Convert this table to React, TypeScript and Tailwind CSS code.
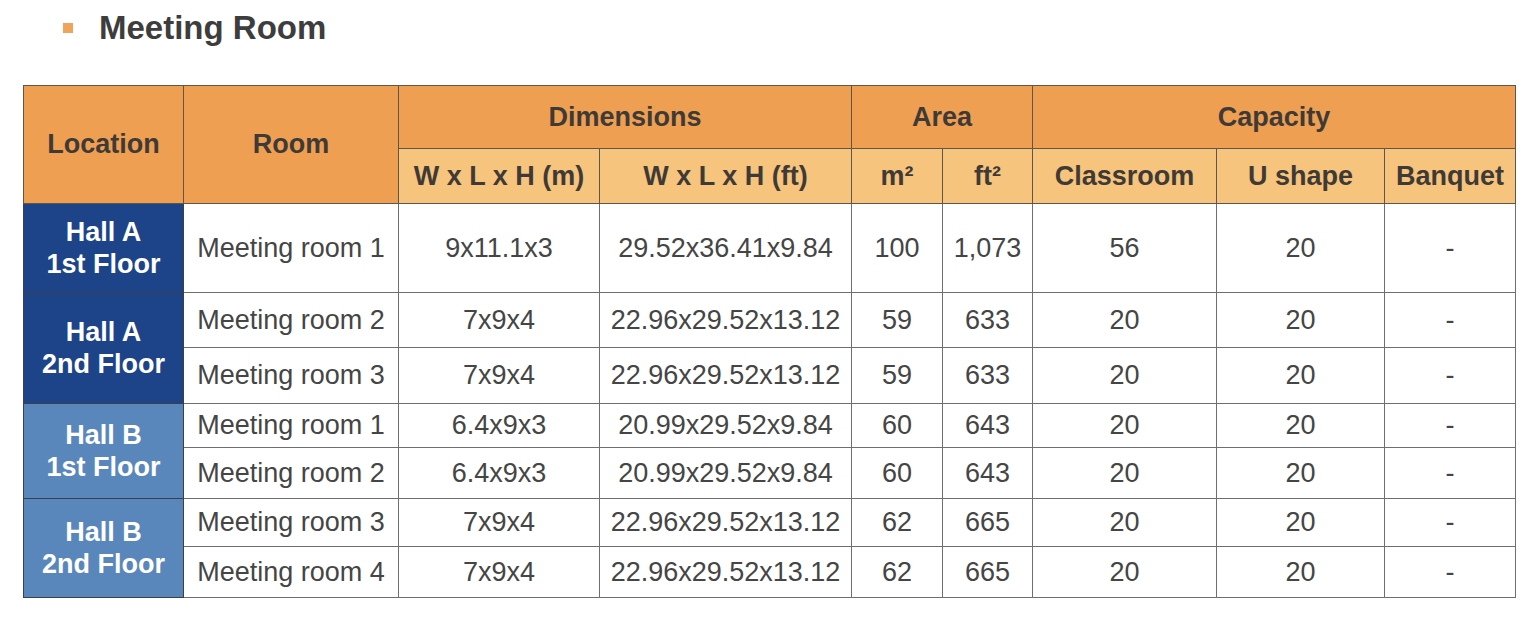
import React from "react";

type Row = {
  room: string;
  m: string;
  ft: string;
  m2: string;
  ft2: string;
  classroom: string;
  ushape: string;
  banquet: string;
  h: string;
};

type Group = {
  name: [string, string];
  tone: "dark" | "light";
  rows: Row[];
};

const groups: Group[] = [
  {
    name: ["Hall A", "1st Floor"],
    tone: "dark",
    rows: [
      { room: "Meeting room 1", m: "9x11.1x3", ft: "29.52x36.41x9.84", m2: "100", ft2: "1,073", classroom: "56", ushape: "20", banquet: "-", h: "h-[89px]" },
    ],
  },
  {
    name: ["Hall A", "2nd Floor"],
    tone: "dark",
    rows: [
      { room: "Meeting room 2", m: "7x9x4", ft: "22.96x29.52x13.12", m2: "59", ft2: "633", classroom: "20", ushape: "20", banquet: "-", h: "h-[55px]" },
      { room: "Meeting room 3", m: "7x9x4", ft: "22.96x29.52x13.12", m2: "59", ft2: "633", classroom: "20", ushape: "20", banquet: "-", h: "h-[56px]" },
    ],
  },
  {
    name: ["Hall B", "1st Floor"],
    tone: "light",
    rows: [
      { room: "Meeting room 1", m: "6.4x9x3", ft: "20.99x29.52x9.84", m2: "60", ft2: "643", classroom: "20", ushape: "20", banquet: "-", h: "h-[44px]" },
      { room: "Meeting room 2", m: "6.4x9x3", ft: "20.99x29.52x9.84", m2: "60", ft2: "643", classroom: "20", ushape: "20", banquet: "-", h: "h-[51px]" },
    ],
  },
  {
    name: ["Hall B", "2nd Floor"],
    tone: "light",
    rows: [
      { room: "Meeting room 3", m: "7x9x4", ft: "22.96x29.52x13.12", m2: "62", ft2: "665", classroom: "20", ushape: "20", banquet: "-", h: "h-[48px]" },
      { room: "Meeting room 4", m: "7x9x4", ft: "22.96x29.52x13.12", m2: "62", ft2: "665", classroom: "20", ushape: "20", banquet: "-", h: "h-[51px]" },
    ],
  },
];

const head = "border border-[#5e554c] bg-[#ee9f52] text-[#3f3a36] font-bold text-[27px] leading-none text-center align-middle p-0";
const sub = "border border-[#5e554c] bg-[#f6c47c] text-[#3f3a36] font-bold text-[27px] leading-none text-center align-middle p-0";
const cell = "border border-[#6f6f6f] text-[#454545] text-[27px] leading-none text-center align-middle p-0";

export default function App() {
  return (
    <div className="w-[1536px] h-[634px] bg-white font-['Liberation_Sans',Arial,sans-serif]">
      <div className="flex items-center h-[56px] pl-[63px]">
        <span className="w-[10px] h-[10px] bg-[#f0a35a] mr-[26px]" />
        <h1 className="text-[33px] font-bold text-[#3d3d3d]">Meeting Room</h1>
      </div>

      <table className="ml-[23px] mt-[29px] w-[1492px] border-collapse table-fixed">
        <colgroup>
          <col className="w-[160px]" />
          <col className="w-[215px]" />
          <col className="w-[201px]" />
          <col className="w-[252px]" />
          <col className="w-[91px]" />
          <col className="w-[90px]" />
          <col className="w-[184px]" />
          <col className="w-[168px]" />
          <col className="w-[131px]" />
        </colgroup>
        <thead>
          <tr className="h-[63px]">
            <th rowSpan={2} className={head}>Location</th>
            <th rowSpan={2} className={head}>Room</th>
            <th colSpan={2} className={head}>Dimensions</th>
            <th colSpan={2} className={head}>Area</th>
            <th colSpan={3} className={head}>Capacity</th>
          </tr>
          <tr className="h-[55px]">
            <th className={sub}>W x L x H (m)</th>
            <th className={sub}>W x L x H (ft)</th>
            <th className={sub}>m²</th>
            <th className={sub}>ft²</th>
            <th className={sub}>Classroom</th>
            <th className={sub}>U shape</th>
            <th className={sub}>Banquet</th>
          </tr>
        </thead>
        <tbody>
          {groups.map((g) =>
            g.rows.map((r, i) => (
              <tr key={g.name.join() + r.room} className={r.h}>
                {i === 0 && (
                  <td
                    rowSpan={g.rows.length}
                    className={
                      "border border-[#3a3f4a] text-white font-bold text-[27px] leading-[32px] text-center align-middle p-0 " +
                      (g.tone === "dark" ? "bg-[#1d4389]" : "bg-[#5a87bb]")
                    }
                  >
                    {g.name[0]}
                    <br />
                    {g.name[1]}
                  </td>
                )}
                <td className={cell}>{r.room}</td>
                <td className={cell}>{r.m}</td>
                <td className={cell}>{r.ft}</td>
                <td className={cell}>{r.m2}</td>
                <td className={cell}>{r.ft2}</td>
                <td className={cell}>{r.classroom}</td>
                <td className={cell}>{r.ushape}</td>
                <td className={cell}>{r.banquet}</td>
              </tr>
            ))
          )}
        </tbody>
      </table>
    </div>
  );
}
